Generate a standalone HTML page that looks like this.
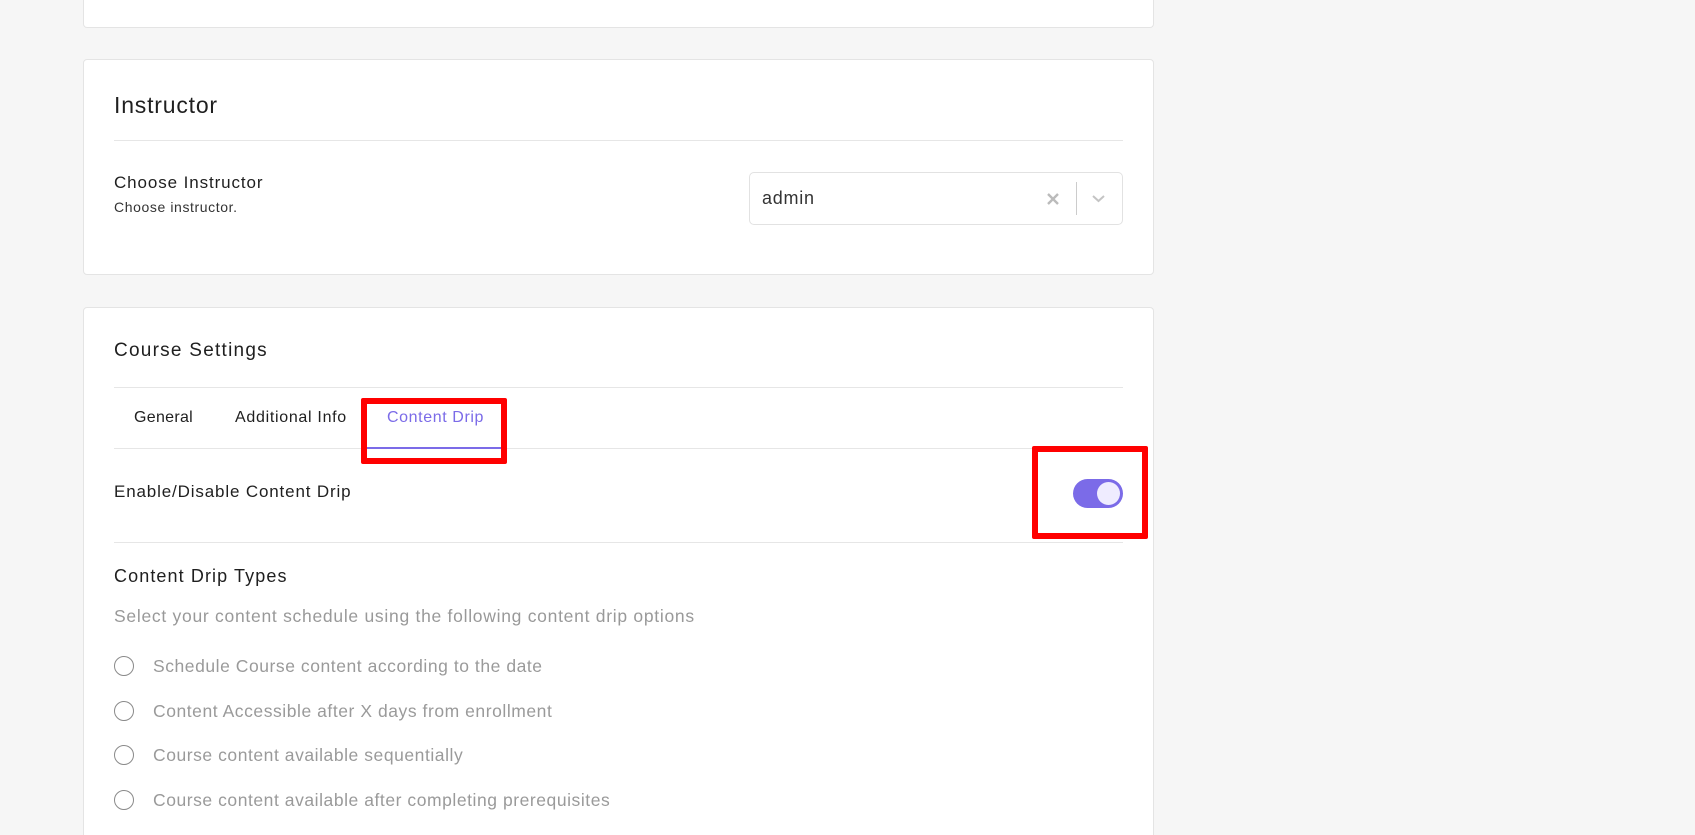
<!DOCTYPE html>
<html style="height:835px;overflow:hidden"><head><meta charset="utf-8"><style>
*{box-sizing:border-box;margin:0;padding:0}
body{width:1695px;height:835px;background:#f6f6f6;font-family:"Liberation Sans",sans-serif;position:relative;overflow:hidden;color:#1f1f1f;letter-spacing:0.75px}
.card{position:absolute;left:83px;width:1071px;background:#fff;border:1px solid #e4e4e4;border-radius:4px}
.a{position:absolute;white-space:nowrap}
.hr{position:absolute;left:114px;width:1009px;height:1px;background:#e6e6e6}
.radio{position:absolute;left:114px;width:20px;height:20px;border:1.5px solid #8a8a8a;border-radius:50%}
.opt{position:absolute;left:153px;font-size:17.5px;color:#9a9a9a;white-space:nowrap;letter-spacing:0.55px}
</style></head><body>
<div class="card" style="top:0;height:28px;border-top:none;border-radius:0 0 4px 4px"></div>
<div class="card" style="top:59px;height:216px"></div>
<div class="card" style="top:307px;height:528px;border-bottom:none;border-radius:4px 4px 0 0"></div>

<div class="a" style="left:114px;top:92px;font-size:23px;letter-spacing:0.8px">Instructor</div>
<div class="hr" style="top:140px"></div>
<div class="a" style="left:114px;top:173px;font-size:17px;letter-spacing:0.9px">Choose Instructor</div>
<div class="a" style="left:114px;top:199px;font-size:14px;color:#333;letter-spacing:0.6px">Choose instructor.</div>
<div class="a" style="left:749px;top:172px;width:374px;height:53px;border:1px solid #e2e2e2;border-radius:5px"></div>
<div class="a" style="left:762px;top:188px;font-size:18px;color:#333">admin</div>
<svg class="a" style="left:1046px;top:192px" width="14" height="14" viewBox="0 0 14 14"><path d="M2 2L12 12M12 2L2 12" stroke="#bbb" stroke-width="2.4"/></svg>
<div class="a" style="left:1076px;top:182px;width:1px;height:33px;background:#ccc"></div>
<svg class="a" style="left:1091px;top:194px" width="15" height="9" viewBox="0 0 15 9"><path d="M2 2L7.5 7L13 2" stroke="#c4c4c4" stroke-width="2" fill="none"/></svg>

<div class="a" style="left:114px;top:340px;font-size:19px;letter-spacing:1.25px">Course Settings</div>
<div class="hr" style="top:387px"></div>
<div class="a" style="left:134px;top:409px;font-size:16px;letter-spacing:0.3px">General</div>
<div class="a" style="left:235px;top:409px;font-size:16px;letter-spacing:0.7px">Additional Info</div>
<div class="a" style="left:387px;top:409px;font-size:16px;color:#7b6be8;letter-spacing:0.6px">Content Drip</div>
<div class="hr" style="top:448px"></div>
<div class="a" style="left:367px;top:447px;width:134px;height:2px;background:#7b6be8"></div>
<div class="a" style="left:361px;top:398px;width:146px;height:66px;border:6px solid #f00;border-radius:2px"></div>

<div class="a" style="left:114px;top:482px;font-size:17px;letter-spacing:0.85px">Enable/Disable Content Drip</div>
<div class="a" style="left:1073px;top:479px;width:50px;height:29px;border-radius:15px;background:#7b6be8"></div>
<div class="a" style="left:1097px;top:482px;width:23px;height:23px;border-radius:50%;background:#efecff"></div>
<div class="a" style="left:1032px;top:446px;width:116px;height:93px;border:6px solid #f00;border-radius:2px"></div>
<div class="hr" style="top:542px"></div>

<div class="a" style="left:114px;top:566px;font-size:18px;letter-spacing:1.1px">Content Drip Types</div>
<div class="a" style="left:114px;top:606px;font-size:17.5px;color:#999;letter-spacing:0.72px">Select your content schedule using the following content drip options</div>
<div class="radio" style="top:656px"></div><div class="opt" style="top:656px">Schedule Course content according to the date</div>
<div class="radio" style="top:701px"></div><div class="opt" style="top:701px">Content Accessible after X days from enrollment</div>
<div class="radio" style="top:745px"></div><div class="opt" style="top:745px">Course content available sequentially</div>
<div class="radio" style="top:790px"></div><div class="opt" style="top:790px">Course content available after completing prerequisites</div>
</body></html>
